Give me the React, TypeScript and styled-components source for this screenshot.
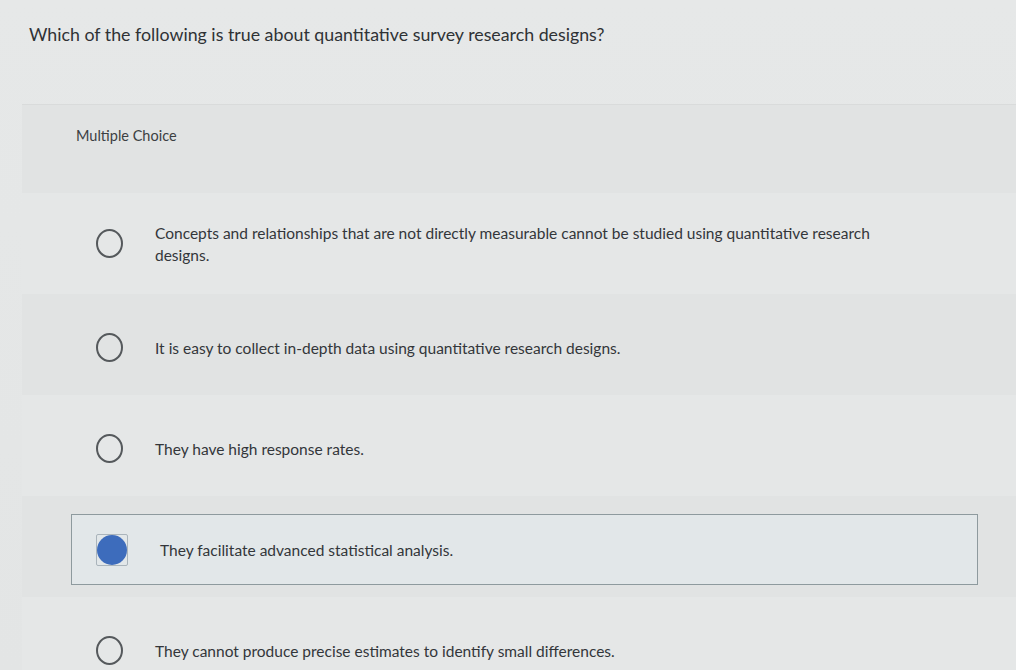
import React from "react"
import styled, { createGlobalStyle } from "styled-components"

const GlobalStyle = createGlobalStyle`
    body {
        margin: 0;
        background: #e4e6e6;
        font-family: "Lato", "Liberation Sans", sans-serif;
        color: #3a3d40;
    }
`

const options = [
    "Concepts and relationships that are not directly measurable cannot be studied using quantitative research designs.",
    "It is easy to collect in-depth data using quantitative research designs.",
    "They have high response rates.",
    "They facilitate advanced statistical analysis.",
    "They cannot produce precise estimates to identify small differences.",
]

const SELECTED = 3

const App: React.FC = (): JSX.Element => {
    return (
        <>
            <GlobalStyle />
            <Page>
                <Question>Which of the following is true about quantitative survey research designs?</Question>
                <Panel>
                    <Kind>Multiple Choice</Kind>
                    <OptionList>
                        {options.map((text, i) => (
                            <OptionRow key={i}>
                                <Option selected={i === SELECTED}>
                                    <Radio selected={i === SELECTED}>
                                        {i === SELECTED && <Dot />}
                                    </Radio>
                                    <Label>{text}</Label>
                                </Option>
                            </OptionRow>
                        ))}
                    </OptionList>
                </Panel>
            </Page>
        </>
    )
}

export default App

const Page = styled.div`
    width: 1016px;
    height: 670px;
    overflow: hidden;
    background: linear-gradient(180deg, #e6e8e8 0%, #e3e5e5 100%);
`

const Question = styled.div`
    padding: 23px 0 0 29px;
    height: 104px;
    box-sizing: border-box;
    font-size: 17.8px;
    color: #2f3235;
`

const Panel = styled.div`
    margin-left: 22px;
    background: #e1e3e3;
    border-top: 1px solid #d9dbdb;
    padding-top: 22px;
`

const Kind = styled.div`
    padding-left: 54px;
    font-size: 14.5px;
    color: #3c3f42;
    height: 66px;
`

const OptionList = styled.div`
    display: flex;
    flex-direction: column;
`

const OptionRow = styled.div`
    height: 101px;
    display: flex;
    align-items: center;
    padding: 6px 38px 0 49px;
    box-sizing: border-box;
    &:nth-child(odd) {
        background: #e5e7e7;
    }
    &:first-child {
        padding-top: 0;
    }
`

const Option = styled.div<{ selected: boolean }>`
    display: flex;
    align-items: center;
    width: 100%;
    box-sizing: border-box;
    height: ${p => (p.selected ? "71px" : "auto")};
    border: 1px solid ${p => (p.selected ? "#8e9a9e" : "transparent")};
    background: ${p => (p.selected ? "#e2e7e9" : "transparent")};
    padding-left: 24px;
`

const Radio = styled.div<{ selected: boolean }>`
    flex: none;
    width: ${p => (p.selected ? "32px" : "27px")};
    height: ${p => (p.selected ? "32px" : "29px")};
    box-sizing: border-box;
    border-radius: ${p => (p.selected ? "2px" : "50%")};
    border: ${p => (p.selected ? "1px solid #aab4bb" : "2px solid #55595c")};
    display: flex;
    align-items: center;
    justify-content: center;
    margin-right: 32px;
`

const Dot = styled.div`
    width: 30px;
    height: 30px;
    border-radius: 50%;
    background: #3d6cbc;
`

const Label = styled.div`
    max-width: 740px;
    font-size: 15.5px;
    line-height: 22px;
    color: #33363a;
`
